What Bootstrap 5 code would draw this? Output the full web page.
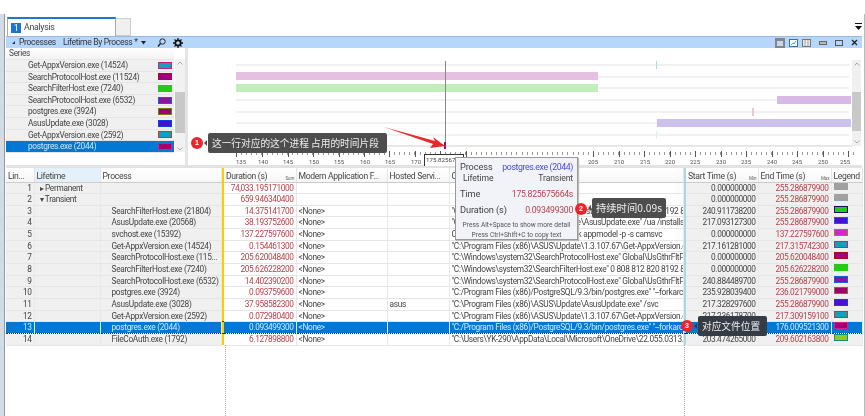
<!doctype html>
<html lang="en"><head><meta charset="utf-8">
<link href="https://cdn.jsdelivr.net/npm/bootstrap@5.3.0/dist/css/bootstrap.min.css" rel="stylesheet">
<style>
html,body{height:416px;overflow:hidden;background:#fff}
body{font:8.3px/11px Roboto,"Liberation Sans",sans-serif;letter-spacing:-.3px;color:#444;position:relative;filter:blur(.3px)}
.shell{height:416px;padding:17px 3px 0 6px}
.leftedge{position:absolute;left:0;top:14px;bottom:0;width:5px;background:#d3dbe4;border-right:1px solid #8f99a4}
.rightedge{position:absolute;right:0;top:14px;bottom:0;width:1px;background:#bbb}
.tabs{height:19px;margin-left:1px}
.tab1{width:109px;height:19px;border:1px solid #aaa;border-top:2px solid #1a7ad0;border-bottom:0;gap:3px;padding-left:3px;background:#fff;font-size:8.8px}
.tabnum{width:10px;height:10px;background:#1b75d0;color:#fff;text-align:center;line-height:10px}
.tab2{width:15px;height:18px;background:#f0f0f0;border:1px solid #ccc;border-left:0;margin-top:1px}
.tabmenu{position:absolute;left:855px;top:23px}
.panebar{height:12px;background:#b6d6fb;border-top:1px solid #9db8d6;gap:3px;padding-left:5px;color:#333;font-size:8.5px;line-height:11px}
.panes{height:120px;border-bottom:3px solid #e2e2e2}
.serieswrap{width:182px;border-right:3px solid #e4e4e4}
.seriescol{width:169px}
.serieshead{height:12px;background:linear-gradient(#fff,#f3f3f3);padding-left:3px;border-bottom:1px solid #e7e7e7}
.srow{height:11.6px;padding-left:22px;background:#f0f0f0;border-bottom:1px solid #e4e4e4;line-height:10.6px}
.srow .nm{width:130px}
.srow.sel{background:#0078d4;color:#cfe6ff}
.legbox{display:block;width:14px;height:7px;border:1px solid #000}
.scrolly{width:10px;height:93px;margin-top:11px;margin-left:1px;background:#f1f1f1}
.thumb{height:41px;margin-top:27px;background:#c8c8c8}
.chev{display:block;margin:2px auto 0}
.chart{width:674px;height:117px;position:relative}
.lane{position:absolute;left:48px;right:13px;height:2px;background:#f1f1f1}
.seg{position:absolute;height:8px}
.scrollr{position:absolute;right:1px;top:12px;width:9px;height:86px;background:#f0f0f0}
.scrollr i{display:block;height:39px;margin-top:26px;background:#c8c8c8}
.baseline{position:absolute;left:48px;right:10px;top:97px;height:2px;background:#e8e8e8}
.ruler{position:absolute;left:48px;top:103px;width:620px;height:14px}
.ruler em{position:absolute;top:7px;font-style:normal;font-size:6px;line-height:8px;transform:translateX(-50%);color:#555;letter-spacing:0}
.ruler b{position:absolute;top:0;width:1px;height:6px;background:#555}
.rtick{position:absolute;top:1px;left:0;right:0;height:3px;background:repeating-linear-gradient(90deg,#999 0,#999 1px,transparent 1px,transparent 5.1px)}
.cursor{position:absolute;left:257px;top:13px;width:1px;height:84px;background:#888}
.marker{position:absolute;left:256px;top:94px;width:2px;height:7px;background:#a0107e}
.rulerval{position:absolute;left:236px;top:106px;width:40px;height:12px;border:1px solid #333;border-bottom:0;background:#fff;font-size:6.2px;line-height:11px;padding-left:1px;overflow:hidden;white-space:nowrap;letter-spacing:0}
table.grid{table-layout:fixed;width:856px;margin:0;border-collapse:collapse;font-size:8.3px}
table.grid th{height:14px;padding:0 2px;font-weight:400;background:linear-gradient(#fff,#f6f6f6);border:0;border-right:1px solid #e6e6e6;border-bottom:1px solid #ccc;white-space:nowrap;overflow:hidden;color:#444;line-height:11px;position:relative;font-size:8.6px}
table.grid td{height:11.66px;padding:0 2px;line-height:10px;background:#fff;color:#444;border:0;border-right:1px solid #e9e9e9;border-bottom:1px solid #e6e6e6;white-space:nowrap;overflow:hidden;box-shadow:none}
table.grid td.gr{background:#f0f0f0}
table.grid td.red,.red{color:#b8404a}
table.grid td.num{text-align:right;letter-spacing:-.4px}
table.grid td.pr{padding-left:11px}
table.grid td.lf{padding-left:5px}
table.grid .ybar{background:#ffcc00;padding:0;border:0}
table.grid .bbar{background:#a9d6e8;padding:0;border:0}
table.grid tr.sel td{color:#d7eaff;background:#0078d4;border-top:1px dotted #234;border-bottom:1px dotted #234}
table.grid tr.sel td.ybar{background:#ffcc00}
table.grid tr.sel td.bbar{background:#a9d6e8}
.tag{position:absolute;right:1px;bottom:0;font-size:4.5px;line-height:6px;color:#666;letter-spacing:0}
.tipbox{position:absolute;left:455px;top:157px;width:123px;height:83px;background:#f2f3f9;border:1px solid #999;padding:3px 4px;font-size:9.2px;line-height:12px;color:#444;box-shadow:1px 1px 1px #bbb;white-space:nowrap;letter-spacing:-.1px}
.tipbox .ln{justify-content:space-between}
.tipbox .sm{font-size:8.6px;line-height:11px;padding:0 0 0 3px}
.tipbox .red{font-size:8.7px;letter-spacing:-.3px}
.tipval{color:#4a4ae0;font-size:8.8px;letter-spacing:-.4px}
.tipfoot{font-size:6.6px;line-height:9.5px;text-align:center;color:#555;margin-top:5px;letter-spacing:0}
.note{position:absolute;background:#4d4d4d;color:#eee;border-radius:2px;font:9.7px/20px "Noto Sans CJK SC",sans-serif;letter-spacing:0;padding:0 4px;white-space:nowrap;height:20px}
.note::before{content:"";position:absolute;left:-4px;top:50%;margin-top:-3px;border:3px solid transparent;border-right-color:inherit;border-left:0}
.note1{left:208px;top:133px;width:179px;border-color:#4d4d4d}
.note2{left:592px;top:198px;width:74px;border-color:#4d4d4d;font-size:10.3px}
.note3{left:698px;top:316px;width:69px;background:#363c46;border-color:#363c46}
.pin{position:absolute;width:12px;height:12px;border-radius:50%;background:#e8262b;color:#fff;text-align:center;font:700 7px/12px "Liberation Sans",sans-serif;letter-spacing:0}
.pin1{left:191px;top:137px}.pin2{left:575px;top:203px}.pin3{left:681px;top:320px}
.arrowsvg{position:absolute;left:380px;top:120px}
.dash{position:absolute;top:345px;bottom:0;width:0;border-left:1px dotted #aaa}
.dash1{left:225px}.dash2{left:684px}
</style></head><body>
<div class="leftedge"></div><div class="rightedge"></div>
<svg class="tabmenu" width="7" height="7" viewBox="0 0 7 7"><path d="M0 0h7v1H0zM0 3h7L3.500 7z" fill="#111"/></svg>
<div class="shell">
 <div class="tabs d-flex">
  <div class="tab1 d-flex align-items-center"><span class="tabnum">1</span><span>Analysis</span></div>
  <div class="tab2"></div>
 </div>
 <div class="panebar d-flex align-items-center">
  <svg width="5" height="5" viewBox="0 0 5 5"><path d="M4 1v3H1z" fill="#333"/></svg>
  <span>Processes</span><span class="ms-1">Lifetime By Process *</span>
  <svg width="5" height="4" viewBox="0 0 5 4"><path d="M0 0h5L2.500 3.500z" fill="#222"/></svg>
  <svg class="ms-2" width="9" height="10" viewBox="0 0 9 10"><circle cx="5.500" cy="3.500" r="2.700" fill="none" stroke="#222"/><path d="M3.500 5.500L1 8.500" stroke="#222" stroke-width="1.400"/></svg>
  <svg class="ms-1" width="10" height="10" viewBox="0 0 10 10"><circle cx="5" cy="5" r="2.700" fill="none" stroke="#111" stroke-width="1.800"/><path d="M5 0v2M5 8v2M0 5h2M8 5h2M1.500 1.500l1.400 1.400M7.100 7.100l1.400 1.400M1.500 8.500l1.400-1.400M7.100 2.900l1.400-1.400" stroke="#111" stroke-width="1.300"/></svg>
  <div class="ms-auto d-flex gap-1 align-items-center pe-1">
   <svg width="10" height="10" viewBox="0 0 10 10"><rect width="10" height="10" fill="#7d8794"/><rect x="2" y="3" width="6" height="5" fill="#cfd6df"/></svg>
   <svg width="9" height="8" viewBox="0 0 9 8"><rect x=".5" y=".5" width="8" height="7" fill="#fff" stroke="#3a6fa8"/><path d="M2 6l2-2 1 1 2-3" fill="none" stroke="#3aa0e8"/></svg>
   <svg width="9" height="8" viewBox="0 0 9 8"><rect x=".5" y=".5" width="8" height="7" fill="#e8e8e8" stroke="#777"/><path d="M3 1v6M6 1v6" stroke="#aaa"/></svg>
   <svg width="8" height="4" viewBox="0 0 8 4" class="ms-1"><rect x=".5" y=".5" width="7" height="3" fill="#bbb" stroke="#666"/></svg>
   <svg width="8" height="6" viewBox="0 0 8 6" class="ms-1"><rect x=".5" y=".5" width="7" height="5" fill="none" stroke="#555"/></svg>
   <svg width="7" height="7" viewBox="0 0 7 7" class="ms-1"><path d="M1 1l5 5M6 1L1 6" stroke="#222" stroke-width="1.300"/></svg>
  </div>
 </div>
 <div class="panes d-flex">
  <div class="serieswrap d-flex">
   <div class="seriescol">
    <div class="serieshead">Series</div>
    <div class="srow d-flex align-items-center"><span class="nm">Get-AppxVersion.exe (14524)</span><span class="legbox" style="background:#12a0c0;border-color:#d0206a"></span></div>
    <div class="srow d-flex align-items-center"><span class="nm">SearchProtocolHost.exe (11524)</span><span class="legbox" style="background:#a00080;border-color:#a01020"></span></div>
    <div class="srow d-flex align-items-center"><span class="nm">SearchFilterHost.exe (7240)</span><span class="legbox" style="background:#22cc10;border-color:#22cc10"></span></div>
    <div class="srow d-flex align-items-center"><span class="nm">SearchProtocolHost.exe (6532)</span><span class="legbox" style="background:#9010a0;border-color:#1060e0"></span></div>
    <div class="srow d-flex align-items-center"><span class="nm">postgres.exe (3924)</span><span class="legbox" style="background:#a00070;border-color:#708010"></span></div>
    <div class="srow d-flex align-items-center"><span class="nm">AsusUpdate.exe (3028)</span><span class="legbox" style="background:#4a10d0;border-color:#1040e0"></span></div>
    <div class="srow d-flex align-items-center"><span class="nm">Get-AppxVersion.exe (2592)</span><span class="legbox" style="background:#12a0c0;border-color:#e03010"></span></div>
    <div class="srow sel d-flex align-items-center"><span class="nm">postgres.exe (2044)</span><span class="legbox" style="background:#a00070;border-color:#d02090"></span></div>
   </div>
   <div class="scrolly">
    <svg class="chev" width="6" height="4" viewBox="0 0 6 4"><path d="M.5 3.500L3 1l2.500 2.500" fill="none" stroke="#aaa"/></svg>
    <div class="thumb"></div>
    <svg class="chev" style="margin-top:14px" width="6" height="4" viewBox="0 0 6 4"><path d="M.5.500L3 3l2.500-2.500" fill="none" stroke="#aaa"/></svg>
   </div>
  </div>
  <div class="chart">
   <div class="lane" style="top:16px"></div><div class="lane" style="top:28px"></div><div class="lane" style="top:39px"></div><div class="lane" style="top:51px"></div><div class="lane" style="top:63px"></div><div class="lane" style="top:74px"></div><div class="lane" style="top:86px"></div>
   <div class="baseline"></div>
   <div class="seg" style="left:48px;width:362px;top:24px;background:#e6c0e0"></div>
   <div class="seg" style="left:48px;width:362px;top:36px;background:#c4edbc"></div>
   <div class="seg" style="left:589px;width:74px;top:48px;background:#d8b8e6"></div>
   <div class="seg" style="left:469px;width:194px;top:71px;background:#ccc0ec"></div>
   <div class="seg" style="left:564px;width:2px;top:60px;background:#e6c8dc"></div>
   <div class="seg" style="left:468px;width:1px;top:13px;background:#a9dbe8"></div>
   <div class="seg" style="left:468px;width:1px;top:83px;background:#d5eef4"></div>
   <div class="scrollr"><svg class="chev" width="6" height="4" viewBox="0 0 6 4"><path d="M.5 3.500L3 1l2.500 2.500" fill="none" stroke="#aaa"/></svg><i></i><svg class="chev" style="margin-top:9px" width="6" height="4" viewBox="0 0 6 4"><path d="M.5.500L3 3l2.500-2.500" fill="none" stroke="#aaa"/></svg></div>
   <div class="cursor"></div><div class="marker"></div>
   <div class="ruler"><div class="rtick"></div>
    <b style="left:0"></b><em style="left:5px">135</em><b style="left:26px"></b><em style="left:27px">140</em><b style="left:52px"></b><em style="left:52px">145</em><b style="left:77px"></b><em style="left:78px">150</em><b style="left:103px"></b><em style="left:103px">155</em><b style="left:128px"></b><em style="left:129px">160</em><b style="left:153px"></b><em style="left:154px">165</em><b style="left:179px"></b><em style="left:180px">170</em><b style="left:204px"></b><b style="left:230px"></b><b style="left:357px"></b><b style="left:383px"></b><em style="left:357px">205</em><b style="left:408px"></b><em style="left:383px">210</em><b style="left:434px"></b><em style="left:409px">215</em><b style="left:459px"></b><em style="left:434px">220</em><b style="left:485px"></b><em style="left:459px">225</em><b style="left:510px"></b><em style="left:485px">230</em><b style="left:536px"></b><em style="left:510px">235</em><b style="left:561px"></b><em style="left:536px">240</em><b style="left:587px"></b><em style="left:561px">245</em><b style="left:612px"></b><em style="left:587px">250</em><em style="left:609px">255</em>
   </div>
   <div class="rulerval">175.825675</div>
  </div>
 </div>
 <table class="table grid">
  <colgroup><col style="width:28px"><col style="width:66px"><col style="width:121px"><col style="width:3px"><col style="width:72px"><col style="width:91px"><col style="width:62px"><col style="width:234px"><col style="width:3px"><col style="width:72px"><col style="width:73px"><col style="width:31px"></colgroup>
  <thead><tr><th>Lin...</th><th style="background:#e4f1fb">Lifetime</th><th>Process</th><th class="ybar"></th><th>Duration (s)<span class="tag">Sum</span></th><th>Modern Application F...</th><th>Hosted Servi...</th><th>C</th><th class="bbar"></th><th>Start Time (s)<span class="tag">Min</span></th><th>End Time (s)<span class="tag">Max</span></th><th>Legend</th></tr></thead>
  <tbody>
  <tr><td class="gr num">1</td><td class="gr lf">&#9656; Permanent</td><td class="gr"></td><td class="ybar"></td><td class="num red">74,033.195171000</td><td></td><td></td><td></td><td class="bbar"></td><td class="gr num">0.000000000</td><td class="gr num red">255.286879900</td><td class="gr"><span class="legbox" style="background:#a0a0a0;border-color:#a0a0a0"></span></td></tr>
  <tr><td class="gr num">2</td><td class="gr lf">&#9662; Transient</td><td class="gr"></td><td class="ybar"></td><td class="num red">659.946340400</td><td></td><td></td><td></td><td class="bbar"></td><td class="gr num">0.000000000</td><td class="gr num red">255.286879900</td><td class="gr"><span class="legbox" style="background:#a0a0a0;border-color:#a0a0a0"></span></td></tr>
  <tr><td class="gr num">3</td><td class="gr"></td><td class="gr pr">SearchFilterHost.exe (21804)</td><td class="ybar"></td><td class="num red">14.375141700</td><td>&lt;None&gt;</td><td></td><td>"C:\Windows\system32\SearchFilterHost.exe" 0 808 812 820 8192 812</td><td class="bbar"></td><td class="gr num">240.911738200</td><td class="gr num red">255.286879900</td><td class="gr"><span class="legbox" style="background:#22cc10;border-color:#201060"></span></td></tr>
  <tr><td class="gr num">4</td><td class="gr"></td><td class="gr pr">AsusUpdate.exe (20568)</td><td class="ybar"></td><td class="num red">38.193752600</td><td>&lt;None&gt;</td><td></td><td>"C:\Program Files (x86)\ASUS\Update\AsusUpdate.exe" /ua /installsource</td><td class="bbar"></td><td class="gr num">217.093127300</td><td class="gr num red">255.286879900</td><td class="gr"><span class="legbox" style="background:#4a10d0;border-color:#1060e0"></span></td></tr>
  <tr><td class="gr num">5</td><td class="gr"></td><td class="gr pr">svchost.exe (15392)</td><td class="ybar"></td><td class="num red">137.227597600</td><td>&lt;None&gt;</td><td></td><td>C:\Windows\system32\svchost.exe -k appmodel -p -s camsvc</td><td class="bbar"></td><td class="gr num">0.000000000</td><td class="gr num red">137.227597600</td><td class="gr"><span class="legbox" style="background:#e020d0;border-color:#60a010"></span></td></tr>
  <tr><td class="gr num">6</td><td class="gr"></td><td class="gr pr">Get-AppxVersion.exe (14524)</td><td class="ybar"></td><td class="num red">0.154461300</td><td>&lt;None&gt;</td><td></td><td>"C:\Program Files (x86)\ASUS\Update\1.3.107.67\Get-AppxVersion.exe"</td><td class="bbar"></td><td class="gr num">217.161281000</td><td class="gr num red">217.315742300</td><td class="gr"><span class="legbox" style="background:#12a0c0;border-color:#d0206a"></span></td></tr>
  <tr><td class="gr num">7</td><td class="gr"></td><td class="gr pr">SearchProtocolHost.exe (115...</td><td class="ybar"></td><td class="num red">205.620048400</td><td>&lt;None&gt;</td><td></td><td>"C:\Windows\system32\SearchProtocolHost.exe" Global\UsGthrFltPipe</td><td class="bbar"></td><td class="gr num">0.000000000</td><td class="gr num red">205.620048400</td><td class="gr"><span class="legbox" style="background:#a00080;border-color:#a01020"></span></td></tr>
  <tr><td class="gr num">8</td><td class="gr"></td><td class="gr pr">SearchFilterHost.exe (7240)</td><td class="ybar"></td><td class="num red">205.626228200</td><td>&lt;None&gt;</td><td></td><td>"C:\Windows\system32\SearchFilterHost.exe" 0 808 812 820 8192 812</td><td class="bbar"></td><td class="gr num">0.000000000</td><td class="gr num red">205.626228200</td><td class="gr"><span class="legbox" style="background:#22cc10;border-color:#22cc10"></span></td></tr>
  <tr><td class="gr num">9</td><td class="gr"></td><td class="gr pr">SearchProtocolHost.exe (6532)</td><td class="ybar"></td><td class="num red">14.402390200</td><td>&lt;None&gt;</td><td></td><td>"C:\Windows\system32\SearchProtocolHost.exe" Global\UsGthrFltPipe</td><td class="bbar"></td><td class="gr num">240.884489700</td><td class="gr num red">255.286879900</td><td class="gr"><span class="legbox" style="background:#9010a0;border-color:#1060e0"></span></td></tr>
  <tr><td class="gr num">10</td><td class="gr"></td><td class="gr pr">postgres.exe (3924)</td><td class="ybar"></td><td class="num red">0.093759600</td><td>&lt;None&gt;</td><td></td><td>"C:/Program Files (x86)/PostgreSQL/9.3/bin/postgres.exe" "--forkarch"</td><td class="bbar"></td><td class="gr num">235.928039400</td><td class="gr num red">236.021799000</td><td class="gr"><span class="legbox" style="background:#a00070;border-color:#708010"></span></td></tr>
  <tr><td class="gr num">11</td><td class="gr"></td><td class="gr pr">AsusUpdate.exe (3028)</td><td class="ybar"></td><td class="num red">37.958582300</td><td>&lt;None&gt;</td><td>asus</td><td>"C:\Program Files (x86)\ASUS\Update\AsusUpdate.exe" /svc</td><td class="bbar"></td><td class="gr num">217.328297600</td><td class="gr num red">255.286879900</td><td class="gr"><span class="legbox" style="background:#4a10d0;border-color:#1040e0"></span></td></tr>
  <tr><td class="gr num">12</td><td class="gr"></td><td class="gr pr">Get-AppxVersion.exe (2592)</td><td class="ybar"></td><td class="num red">0.072980400</td><td>&lt;None&gt;</td><td></td><td>"C:\Program Files (x86)\ASUS\Update\1.3.107.67\Get-AppxVersion.exe"</td><td class="bbar"></td><td class="gr num">217.236178700</td><td class="gr num red">217.309159100</td><td class="gr"><span class="legbox" style="background:#12a0c0;border-color:#e03010"></span></td></tr>
  <tr class="sel"><td class="num">13</td><td></td><td class="pr">postgres.exe (2044)</td><td class="ybar"></td><td class="num">0.093499300</td><td>&lt;None&gt;</td><td></td><td>"C:/Program Files (x86)/PostgreSQL/9.3/bin/postgres.exe" "--forkarch"</td><td class="bbar"></td><td class="num">175.916021900</td><td class="num">176.009521300</td><td><span class="legbox" style="background:#a00070;border-color:#d02090"></span></td></tr>
  <tr><td class="gr num">14</td><td class="gr"></td><td class="gr pr">FileCoAuth.exe (1792)</td><td class="ybar"></td><td class="num red">6.127898800</td><td>&lt;None&gt;</td><td></td><td>"C:\Users\YK-290\AppData\Local\Microsoft\OneDrive\22.055.0313.0001\</td><td class="bbar"></td><td class="gr num">203.474265000</td><td class="gr num red">209.602163800</td><td class="gr"><span class="legbox" style="background:#90cc20;border-color:#109080"></span></td></tr>
  </tbody>
 </table>
</div>
<div class="dash dash1"></div><div class="dash dash2"></div>
<div class="tipbox">
 <div class="ln d-flex"><span>Process</span><span class="tipval">postgres.exe (2044)</span></div>
 <div class="ln d-flex sm"><span>Lifetime</span><span>Transient</span></div>
 <div class="ln d-flex" style="margin-top:4px"><span>Time</span><span class="red">175.825675664s</span></div>
 <div class="ln d-flex" style="margin-top:4px"><span>Duration (s)</span><span class="red">0.093499300</span></div>
 <div class="tipfoot">Press Alt+Space to show more detail<br>Press Ctrl+Shift+C to copy text</div>
</div>
<svg class="arrowsvg" width="70" height="30" viewBox="0 0 70 30"><path d="M4 7L55 21L53 17L65 26L50 28L53 24Z" fill="#e8262b"/></svg>
<span class="pin pin1">1</span>
<div class="note note1">这一行对应的这个进程 占用的时间片段</div>
<span class="pin pin2">2</span>
<div class="note note2">持续时间0.09s</div>
<span class="pin pin3">3</span>
<div class="note note3">对应文件位置</div>
</body></html>
